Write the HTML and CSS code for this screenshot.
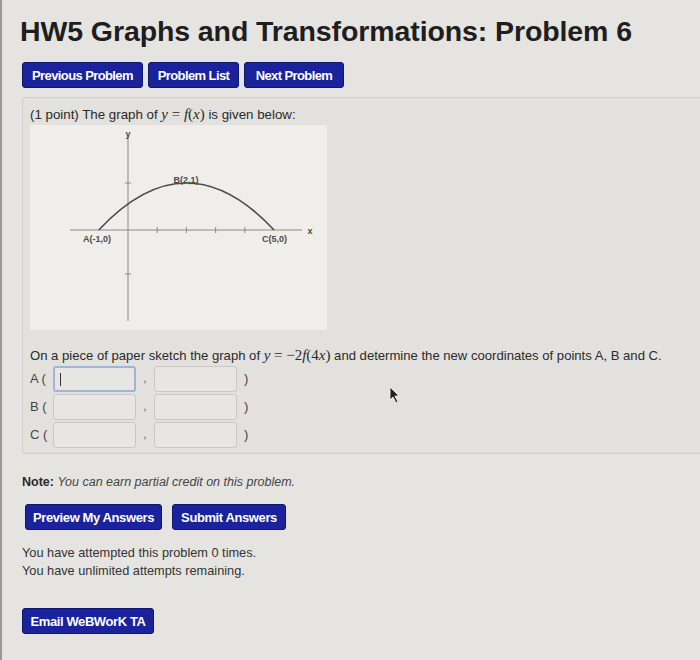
FILE: index.html
```html
<!DOCTYPE html>
<html>
<head>
<meta charset="utf-8">
<link rel="stylesheet" href="styles.css">
</head>
<body>
<h1 class="title">HW5 Graphs and Transformations: Problem 6</h1>
<div class="nav">
  <span class="btn">Previous Problem</span>
  <span class="btn">Problem List</span>
  <span class="btn">Next Problem</span>
</div>
<div class="panel">
  <p class="line">(1 point) The graph of <span class="m">y</span> <span class="mr">=</span> <span class="m">f</span><span class="mr">(</span><span class="m">x</span><span class="mr">)</span> is given below:</p>
  <div class="graph">
    <svg width="297" height="210" viewBox="0 0 297 210">
      <rect width="297" height="210" fill="#efeeeb"/>
      <g stroke="#8a8a8a" stroke-width="1" fill="none">
        <line x1="98" y1="10" x2="98" y2="196"/>
        <line x1="40" y1="105" x2="272" y2="105"/>
        <line x1="95" y1="58" x2="101" y2="58"/>
        <line x1="95" y1="149" x2="101" y2="149"/>
        <line x1="127.2" y1="102" x2="127.2" y2="108"/>
        <line x1="156.4" y1="102" x2="156.4" y2="108"/>
        <line x1="185.6" y1="102" x2="185.6" y2="108"/>
        <line x1="214.8" y1="102" x2="214.8" y2="108"/>
      </g>
      <path d="M68.8 105 Q156.4 11 244 105" stroke="#4a4a4a" stroke-width="1.6" fill="none"/>
      <g class="gl">
        <text x="98" y="12" text-anchor="middle">y</text>
        <text x="280" y="109" text-anchor="middle">x</text>
        <text x="156" y="58" text-anchor="middle">B(2,1)</text>
        <text x="53" y="117">A(-1,0)</text>
        <text x="232" y="117">C(5,0)</text>
      </g>
    </svg>
  </div>
  <p class="line q">On a piece of paper sketch the graph of <span class="m">y</span> <span class="mr">= −2</span><span class="m">f</span><span class="mr">(4</span><span class="m">x</span><span class="mr">)</span> and determine the new coordinates of points A, B and C.</p>
  <div class="rows">
    <div class="row"><span class="lab">A (</span><span class="inp focus"><span class="caret"></span></span><span class="comma">,</span><span class="inp"></span><span class="close">)</span></div>
    <div class="row"><span class="lab">B (</span><span class="inp"></span><span class="comma">,</span><span class="inp"></span><span class="close">)</span></div>
    <div class="row"><span class="lab">C (</span><span class="inp"></span><span class="comma">,</span><span class="inp"></span><span class="close">)</span></div>
  </div>
  <svg class="pointer" width="12" height="18" viewBox="0 0 12 18"><path d="M1 1 L1 14 L4 11 L7 17 L9 16 L6 10 L10 10 Z" fill="#222" stroke="#fff" stroke-width="0.8"/></svg>
</div>
<p class="note"><b>Note:</b> <i>You can earn partial credit on this problem.</i></p>
<div class="actions">
  <span class="btn big">Preview My Answers</span>
  <span class="btn big">Submit Answers</span>
</div>
<p class="attempts">You have attempted this problem 0 times.<br>You have unlimited attempts remaining.</p>
<div class="email"><span class="btn big">Email WeBWorK TA</span></div>
</body>
</html>
```
FILE: styles.css
```css
html, body {
  margin: 0;
  padding: 0;
}
body {
  width: 700px;
  height: 660px;
  overflow: hidden;
  background: #e6e4e1;
  font-family: "Liberation Sans", Arial, sans-serif;
  color: #2a2a2a;
  box-sizing: border-box;
  border-left: 2px solid #9a9896;
  padding-left: 18px;
}
.title {
  margin: 15px 0 0 0;
  font-size: 28.5px;
  line-height: 32px;
  font-weight: bold;
  color: #1e1e1e;
  letter-spacing: -0.1px;
  white-space: nowrap;
}
.nav {
  margin: 15px 0 0 2px;
  display: flex;
  gap: 5px;
}
.btn {
  display: inline-flex;
  align-items: center;
  justify-content: center;
  height: 26px;
  box-sizing: border-box;
  padding: 0 4px;
  background: #1a229c;
  border: 1px solid #0f1670;
  border-radius: 3px;
  color: #fff;
  font-size: 13px;
  font-weight: bold;
  letter-spacing: -0.6px;
  white-space: nowrap;
}
.nav .btn:nth-child(1) { width: 121px; }
.nav .btn:nth-child(2) { width: 91px; }
.nav .btn:nth-child(3) { width: 100px; }
.panel {
  position: relative;
  margin: 9px 0 0 2px;
  background: #e3e1de;
  border: 1px solid #d0cecb;
  border-right: none;
  border-radius: 4px 0 0 4px;
  padding: 8px 0 5px 7px;
}
.line {
  margin: 0;
  font-size: 13.3px;
  line-height: 18px;
  color: #2a2a2a;
}
.m, .mr {
  font-family: "Liberation Serif", "Times New Roman", serif;
  font-size: 15px;
  line-height: 1;
}
.m { font-style: italic; }
.graph {
  margin-top: 1px;
  width: 297px;
  height: 205px;
  overflow: hidden;
}
.graph svg { display: block; }
.gl text {
  font-family: "Liberation Sans", Arial, sans-serif;
  font-size: 9px;
  font-weight: bold;
  fill: #4a4a4a;
}
.q {
  margin-top: 17px;
  font-size: 13.1px;
}
.rows {
  display: flex;
  flex-direction: column;
  gap: 1px;
}
.row {
  display: flex;
  align-items: center;
  height: 27px;
  font-size: 13px;
  color: #444;
}
.lab { width: 23px; }
.inp {
  width: 83px;
  height: 26px;
  box-sizing: border-box;
  border: 1px solid #c9c7c4;
  border-radius: 3px;
  background: #e8e6e3;
  position: relative;
}
.inp.focus { border: 2px solid #9db6d6; }
.caret {
  position: absolute;
  left: 5px;
  top: 5px;
  width: 1px;
  height: 13px;
  background: #333;
}
.comma {
  width: 18px;
  text-align: center;
  font-size: 10px;
}
.close { margin-left: 7px; }
.pointer {
  position: absolute;
  left: 366px;
  top: 288px;
}
.note {
  margin: 19px 0 0 2px;
  font-size: 12.5px;
  line-height: 18px;
  color: #2a2a2a;
}
.note i { color: #444; }
.actions {
  margin: 13px 0 0 5px;
  display: flex;
  gap: 10px;
}
.btn.big { letter-spacing: -0.4px; }
.actions .btn:nth-child(1) { width: 137px; }
.actions .btn:nth-child(2) { width: 114px; }
.attempts {
  margin: 14px 0 0 2px;
  font-size: 12.75px;
  line-height: 18px;
  color: #333;
}
.email { margin: 28px 0 0 2px; }
.email .btn { width: 132px; }
```
